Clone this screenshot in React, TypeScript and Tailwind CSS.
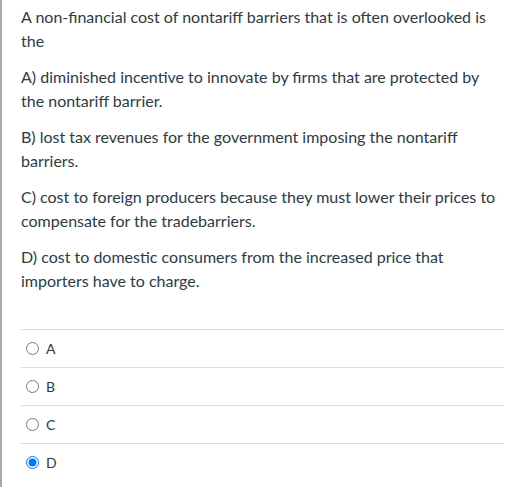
const paragraphs = [
  "A non-financial cost of nontariff barriers that is often overlooked is the",
  "A) diminished incentive to innovate by firms that are protected by the nontariff barrier.",
  "B) lost tax revenues for the government imposing the nontariff barriers.",
  "C) cost to foreign producers because they must lower their prices to compensate for the tradebarriers.",
  "D) cost to domestic consumers from the increased price that importers have to charge.",
];

const answers = ["A", "B", "C", "D"];

export default function App() {
  return (
    <div className="min-h-[487px] w-[513px] bg-white border-l-2 border-[#a9a9a9] font-['Lato',sans-serif] text-[#2d3b45]">
      <div className="pl-[19px] pr-[9px] pt-[5px]">
        <div className="flex flex-col gap-3 text-base leading-6">
          {paragraphs.map((p, i) => (
            <p key={i}>{p}</p>
          ))}
        </div>
        <div className="mt-[36px] flex flex-col">
          {answers.map((a) => (
            <label
              key={a}
              className="flex h-[38px] items-center border-t border-[#dddddd] text-sm"
            >
              <input
                type="radio"
                name="answer"
                readOnly
                defaultChecked={a === "D"}
                className="ml-[5px] mr-[7px] h-[13px] w-[13px]"
              />
              <span>{a}</span>
            </label>
          ))}
        </div>
      </div>
    </div>
  );
}
